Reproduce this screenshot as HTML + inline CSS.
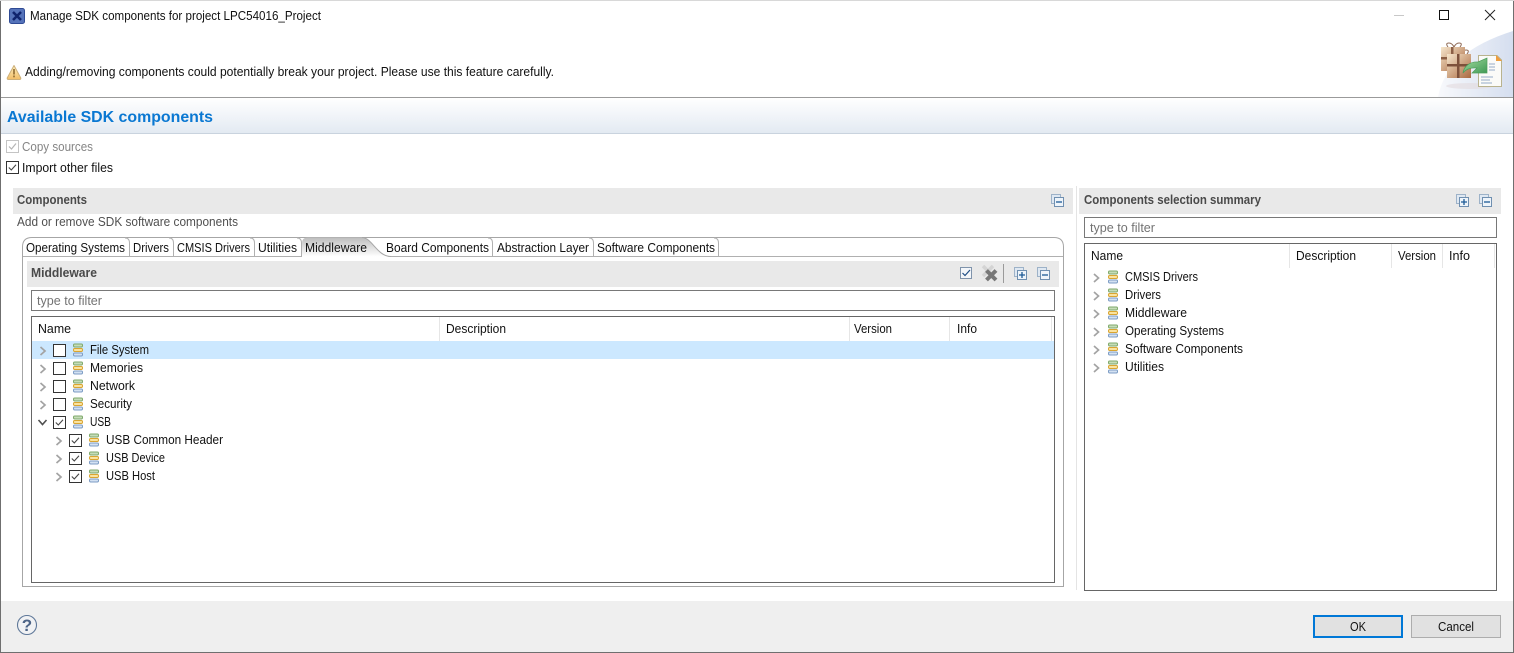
<!DOCTYPE html>
<html lang="en">
<head>
<meta charset="utf-8">
<title>Manage SDK components</title>
<style>
html,body{margin:0;padding:0;background:#fff;width:1514px;height:653px;overflow:hidden}
svg{display:block}
text{font-family:"Liberation Sans",sans-serif;font-size:12.5px;fill:#111;white-space:pre}
.b{font-weight:bold;fill:#4a4a4a}
.g{fill:#737373}
.d{fill:#505050}
.sep{stroke:#e6e6e6;stroke-width:1}
</style>
</head>
<body>
<svg width="1514" height="653" viewBox="0 0 1514 653" xmlns="http://www.w3.org/2000/svg">
<defs>
<linearGradient id="ban" x1="0" y1="0" x2="0" y2="1"><stop offset="0" stop-color="#fff"/><stop offset="1" stop-color="#e3eaf2"/></linearGradient>
<linearGradient id="act" x1="0" y1="0" x2="0" y2="1"><stop offset="0" stop-color="#bdbdbd"/><stop offset="1" stop-color="#fff"/></linearGradient>
<linearGradient id="box1" x1="0" y1="0" x2="1" y2="1"><stop offset="0" stop-color="#f6e6cc"/><stop offset="1" stop-color="#a9683f"/></linearGradient>
<linearGradient id="soft" x1="0" y1="0" x2="1" y2="0"><stop offset="0" stop-color="#f8f9fc"/><stop offset="1" stop-color="#d5deef"/></linearGradient>
<linearGradient id="arr" x1="0" y1="0" x2="1" y2="1"><stop offset="0" stop-color="#a6dca0"/><stop offset="1" stop-color="#3f9a55"/></linearGradient>
<linearGradient id="warn" x1="0" y1="0" x2="0" y2="1"><stop offset="0" stop-color="#fdf0c0"/><stop offset="1" stop-color="#f2bd66"/></linearGradient>
<g id="st">
<rect x=".5" y=".5" width="9" height="3" rx="1.2" fill="#c5dcb8" stroke="#7fa96b"/>
<rect x=".5" y="5" width="9" height="3" rx="1.2" fill="#fae3a0" stroke="#d9a531"/>
<rect x=".5" y="9.5" width="9" height="3" rx="1.2" fill="#d3e1f2" stroke="#7c9cc4"/>
</g>
<polyline id="ch" points="0,0 4.5,4 0,8" fill="none" stroke="#a3a3a3" stroke-width="1.7"/>
<g id="cb"><rect x=".5" y=".5" width="12" height="12" fill="#fff" stroke="#333"/></g>
<g id="cc"><rect x=".5" y=".5" width="12" height="12" fill="#fff" stroke="#333"/><polyline points="2.8,6.5 5.3,9 10,3.8" fill="none" stroke="#444" stroke-width="1.1"/></g>
<g id="ex">
<rect x=".5" y=".5" width="9" height="9" fill="#dfe8f2" stroke="#9db2c8"/>
<rect x="3.5" y="3.5" width="9" height="9" fill="#eef4fa" stroke="#6f8fb0"/>
<path d="M5 8h6M8 5v6" stroke="#1d5a96" stroke-width="1.3" fill="none"/>
</g>
<g id="co">
<rect x=".5" y=".5" width="9" height="9" fill="#dfe8f2" stroke="#9db2c8"/>
<rect x="3.5" y="3.5" width="9" height="9" fill="#eef4fa" stroke="#6f8fb0"/>
<path d="M5 8h6" stroke="#1d5a96" stroke-width="1.3" fill="none"/>
</g>
</defs>

<rect width="1514" height="653" fill="#fff"/>

<!-- title bar -->
<rect x="9.5" y="8.5" width="15" height="15" rx="2" fill="#5573ba" stroke="#2f4a94"/>
<path d="M13 12l8 8M21 12l-8 8" stroke="#10246e" stroke-width="2.6" fill="none"/>
<text x="30" y="20" textLength="291" lengthAdjust="spacingAndGlyphs">Manage SDK components for project LPC54016_Project</text>
<rect x="1394" y="15" width="10" height="1" fill="#c8c8c8"/>
<rect x="1439.5" y="10.5" width="9" height="9" fill="none" stroke="#111" stroke-width="1"/>
<path d="M1485 10l10 10M1495 10l-10 10" stroke="#222" stroke-width="1" fill="none"/>

<!-- warning -->
<path d="M14 65.5L20.800 78Q21 79.500 19.500 79.500H8.500Q7 79.500 7.200 78Z" fill="url(#warn)" stroke="#cdb07a" stroke-linejoin="round"/>
<rect x="13.2" y="69" width="1.6" height="5.5" fill="#8f6b30"/>
<rect x="13.2" y="75.5" width="1.6" height="1.8" fill="#8f6b30"/>
<text x="25" y="76" textLength="529" lengthAdjust="spacingAndGlyphs">Adding/removing components could potentially break your project. Please use this feature carefully.</text>

<!-- banner graphic -->
<path d="M1438 97Q1446 52 1513 31V97Z" fill="url(#soft)"/>
<ellipse cx="1470" cy="86" rx="24" ry="3" fill="#e2dade" opacity=".6"/>
<path d="M1448 47q-3-4 1-4q3 0 5 4q2-4 5-4q4 0 1 4M1455 54q-3-4 1-4q3 0 5 4q2-4 5-4q4 0 1 4" fill="none" stroke="#8f6a55"/>
<rect x="1441" y="47" width="24" height="24" fill="url(#box1)"/>
<rect x="1451" y="47" width="2.5" height="24" fill="#8b5f45"/>
<rect x="1441" y="57" width="24" height="2.5" fill="#8b5f45"/>
<rect x="1447" y="54" width="24" height="24" fill="url(#box1)"/>
<rect x="1457" y="54" width="2.5" height="24" fill="#7d513b"/>
<rect x="1447" y="64" width="24" height="2.5" fill="#7d513b"/>
<path d="M1478.5 55.5H1497L1501.5 60V86.5H1478.5Z" fill="#fbfbf8" stroke="#b9b38e"/>
<path d="M1496 55l6 6l-6 0Z" fill="#ef9d3d"/>
<path d="M1489 64h6M1489 67h6M1489 70h6M1481 77h12M1481 80h9M1481 83h11" stroke="#b8c6d8" stroke-width="1.4"/>
<path d="M1463 73C1464 66 1470 61.500 1478 62L1487 58V73H1472L1477 68C1471 67.500 1466 69 1463 73Z" fill="url(#arr)" stroke="#4d9d5c" stroke-width=".7"/>

<!-- banner -->
<rect x="0" y="97" width="1514" height="1" fill="#9a9a9a"/>
<rect x="0" y="98" width="1514" height="35" fill="url(#ban)"/>
<rect x="0" y="133" width="1514" height="1" fill="#c9d3de"/>
<text x="7" y="122" textLength="206" lengthAdjust="spacingAndGlyphs" style="font-size:16px;font-weight:bold;fill:#0a78d2">Available SDK components</text>

<!-- checkboxes -->
<rect x="6.500" y="140.500" width="12" height="12" fill="#fff" stroke="#c4c4c4"/>
<polyline points="9,146.500 11.500,149 16,143.500" fill="none" stroke="#b5b5b5" stroke-width="1.200"/>
<text x="22" y="151" textLength="71" lengthAdjust="spacingAndGlyphs" style="fill:#858585">Copy sources</text>
<use href="#cc" x="6" y="161"/>
<text x="22" y="172" textLength="91" lengthAdjust="spacingAndGlyphs">Import other files</text>

<!-- components section -->
<rect x="13" y="188" width="1060" height="26" fill="#e9e9e9"/>
<text class="b" x="17" y="204" textLength="70" lengthAdjust="spacingAndGlyphs">Components</text>
<use href="#co" x="1051" y="194"/>
<text class="d" x="17" y="226" textLength="221" lengthAdjust="spacingAndGlyphs">Add or remove SDK software components</text>

<!-- tab folder -->
<path d="M22.500 586.500V247Q22.500 237.500 32 237.500H1054Q1063.500 237.500 1063.500 247V586.500Z" fill="#fff" stroke="#a6a6a6"/>
<path d="M302 256.500V243Q302 237.500 308 237.500H362C372 237.500 377 256.500 391 256.500Z" fill="url(#act)"/>
<path d="M362 237.500C372 237.500 377 256.500 391 256.500" fill="none" stroke="#a6a6a6"/>
<path d="M23 256.500H302M391 256.500H1063" stroke="#b0b0b0"/>
<path d="M125 238Q129.500 238 129.500 243V256M169 238Q173.500 238 173.500 243V256M250 238Q254.500 238 254.500 243V256M297 238Q301.500 238 301.500 243V256M488 238Q492.500 238 492.500 243V256M589 238Q593.500 238 593.500 243V256M714 238Q718.500 238 718.500 243V256" fill="none" stroke="#b0b0b0"/>
<text x="26" y="252" textLength="99" lengthAdjust="spacingAndGlyphs">Operating Systems</text>
<text x="133" y="252" textLength="36" lengthAdjust="spacingAndGlyphs">Drivers</text>
<text x="177" y="252" textLength="73" lengthAdjust="spacingAndGlyphs">CMSIS Drivers</text>
<text x="258" y="252" textLength="39" lengthAdjust="spacingAndGlyphs">Utilities</text>
<text x="305" y="252" textLength="62" lengthAdjust="spacingAndGlyphs">Middleware</text>
<text x="386" y="252" textLength="103" lengthAdjust="spacingAndGlyphs">Board Components</text>
<text x="497" y="252" textLength="92" lengthAdjust="spacingAndGlyphs">Abstraction Layer</text>
<text x="597" y="252" textLength="118" lengthAdjust="spacingAndGlyphs">Software Components</text>

<!-- middleware section -->
<rect x="27" y="261" width="1032" height="26" fill="#e9e9e9"/>
<text class="b" x="31" y="277" textLength="66" lengthAdjust="spacingAndGlyphs">Middleware</text>
<rect x="960.500" y="267.500" width="11" height="11" fill="#f3f6fa" stroke="#7f93ab"/>
<polyline points="962.500,273 965,275.500 970,270" fill="none" stroke="#1f4e86" stroke-width="1.200"/>
<path d="M983 266l10 10M993 266l-10 10" stroke="#d4d4d4" stroke-width="3.500"/>
<path d="M986.500 270.500l9.500 9.500M996 270.500l-9.500 9.500" stroke="#777" stroke-width="4"/>
<rect x="1003" y="264" width="1" height="19" fill="#9a9a9a"/>
<use href="#ex" x="1014" y="267"/>
<use href="#co" x="1037" y="267"/>

<rect x="31.500" y="290.500" width="1023" height="20" fill="#fff" stroke="#787878"/>
<text class="g" x="37" y="305" textLength="65" lengthAdjust="spacingAndGlyphs">type to filter</text>

<!-- left tree -->
<rect x="31.500" y="316.500" width="1023" height="266" fill="#fff" stroke="#666"/>
<rect x="32" y="341" width="1022" height="18" fill="#cce8ff"/>
<path class="sep" d="M439.500 317V341M849.500 317V341M949.500 317V341M1051.500 317V341"/>
<text x="38" y="333" textLength="33" lengthAdjust="spacingAndGlyphs">Name</text>
<text x="446" y="333" textLength="60" lengthAdjust="spacingAndGlyphs">Description</text>
<text x="854" y="333" textLength="38" lengthAdjust="spacingAndGlyphs">Version</text>
<text x="957" y="333" textLength="20" lengthAdjust="spacingAndGlyphs">Info</text>

<use href="#ch" x="40.500" y="347"/><use href="#cb" x="53" y="344"/><use href="#st" x="73" y="343.500"/>
<text x="90" y="354" textLength="59" lengthAdjust="spacingAndGlyphs">File System</text>
<use href="#ch" x="40.500" y="365"/><use href="#cb" x="53" y="362"/><use href="#st" x="73" y="361.500"/>
<text x="90" y="372" textLength="53" lengthAdjust="spacingAndGlyphs">Memories</text>
<use href="#ch" x="40.500" y="383"/><use href="#cb" x="53" y="380"/><use href="#st" x="73" y="379.500"/>
<text x="90" y="390" textLength="45" lengthAdjust="spacingAndGlyphs">Network</text>
<use href="#ch" x="40.500" y="401"/><use href="#cb" x="53" y="398"/><use href="#st" x="73" y="397.500"/>
<text x="90" y="408" textLength="42" lengthAdjust="spacingAndGlyphs">Security</text>
<polyline points="38.500,420 42.500,424.500 46.500,420" fill="none" stroke="#505050" stroke-width="1.600"/>
<use href="#cc" x="53" y="416"/><use href="#st" x="73" y="415.500"/>
<text x="90" y="426" textLength="21" lengthAdjust="spacingAndGlyphs">USB</text>
<use href="#ch" x="56.500" y="437"/><use href="#cc" x="69" y="434"/><use href="#st" x="89" y="433.500"/>
<text x="106" y="444" textLength="117" lengthAdjust="spacingAndGlyphs">USB Common Header</text>
<use href="#ch" x="56.500" y="455"/><use href="#cc" x="69" y="452"/><use href="#st" x="89" y="451.500"/>
<text x="106" y="462" textLength="59" lengthAdjust="spacingAndGlyphs">USB Device</text>
<use href="#ch" x="56.500" y="473"/><use href="#cc" x="69" y="470"/><use href="#st" x="89" y="469.500"/>
<text x="106" y="480" textLength="49" lengthAdjust="spacingAndGlyphs">USB Host</text>

<!-- sash -->
<rect x="1076" y="186" width="1" height="404" fill="#e4e4e4"/>

<!-- summary section -->
<rect x="1079" y="188" width="422" height="26" fill="#e9e9e9"/>
<text class="b" x="1084" y="204" textLength="177" lengthAdjust="spacingAndGlyphs">Components selection summary</text>
<use href="#ex" x="1456" y="194"/>
<use href="#co" x="1479" y="194"/>
<rect x="1084.500" y="217.500" width="412" height="20" fill="#fff" stroke="#787878"/>
<text class="g" x="1090" y="232" textLength="65" lengthAdjust="spacingAndGlyphs">type to filter</text>

<rect x="1084.500" y="243.500" width="412" height="347" fill="#fff" stroke="#666"/>
<path class="sep" d="M1289.500 244V268M1391.500 244V268M1442.500 244V268M1494.500 244V268"/>
<text x="1091" y="260" textLength="32" lengthAdjust="spacingAndGlyphs">Name</text>
<text x="1296" y="260" textLength="60" lengthAdjust="spacingAndGlyphs">Description</text>
<text x="1398" y="260" textLength="38" lengthAdjust="spacingAndGlyphs">Version</text>
<text x="1449" y="260" textLength="21" lengthAdjust="spacingAndGlyphs">Info</text>

<use href="#ch" x="1094" y="274"/><use href="#st" x="1108" y="270.500"/>
<text x="1125" y="281" textLength="73" lengthAdjust="spacingAndGlyphs">CMSIS Drivers</text>
<use href="#ch" x="1094" y="292"/><use href="#st" x="1108" y="288.500"/>
<text x="1125" y="299" textLength="36" lengthAdjust="spacingAndGlyphs">Drivers</text>
<use href="#ch" x="1094" y="310"/><use href="#st" x="1108" y="306.500"/>
<text x="1125" y="317" textLength="62" lengthAdjust="spacingAndGlyphs">Middleware</text>
<use href="#ch" x="1094" y="328"/><use href="#st" x="1108" y="324.500"/>
<text x="1125" y="335" textLength="99" lengthAdjust="spacingAndGlyphs">Operating Systems</text>
<use href="#ch" x="1094" y="346"/><use href="#st" x="1108" y="342.500"/>
<text x="1125" y="353" textLength="118" lengthAdjust="spacingAndGlyphs">Software Components</text>
<use href="#ch" x="1094" y="364"/><use href="#st" x="1108" y="360.500"/>
<text x="1125" y="371" textLength="39" lengthAdjust="spacingAndGlyphs">Utilities</text>

<!-- footer -->
<rect x="0" y="601" width="1514" height="52" fill="#efefef"/>
<circle cx="27" cy="625" r="9.500" fill="#f1f2f4" stroke="#5f7899" stroke-width="1.100"/>
<text x="27" y="631" text-anchor="middle" style="font-size:17px;font-weight:bold;fill:#4d6487">?</text>
<rect x="1314" y="616" width="88" height="21" fill="#e1e1e1" stroke="#0078d7" stroke-width="2"/>
<text x="1350" y="631" textLength="16" lengthAdjust="spacingAndGlyphs">OK</text>
<rect x="1411.500" y="615.500" width="89" height="22" fill="#e1e1e1" stroke="#adadad"/>
<text x="1438" y="631" textLength="36" lengthAdjust="spacingAndGlyphs">Cancel</text>

<!-- window border -->
<rect x="0" y="0" width="1" height="653" fill="#6f6f6f"/>
<rect x="1513" y="0" width="1" height="653" fill="#6f6f6f"/>
<rect x="0" y="652" width="1514" height="1" fill="#6f6f6f"/>
<rect x="0" y="0" width="1514" height="1" fill="#d8d8d8"/>
</svg>
</body>
</html>
